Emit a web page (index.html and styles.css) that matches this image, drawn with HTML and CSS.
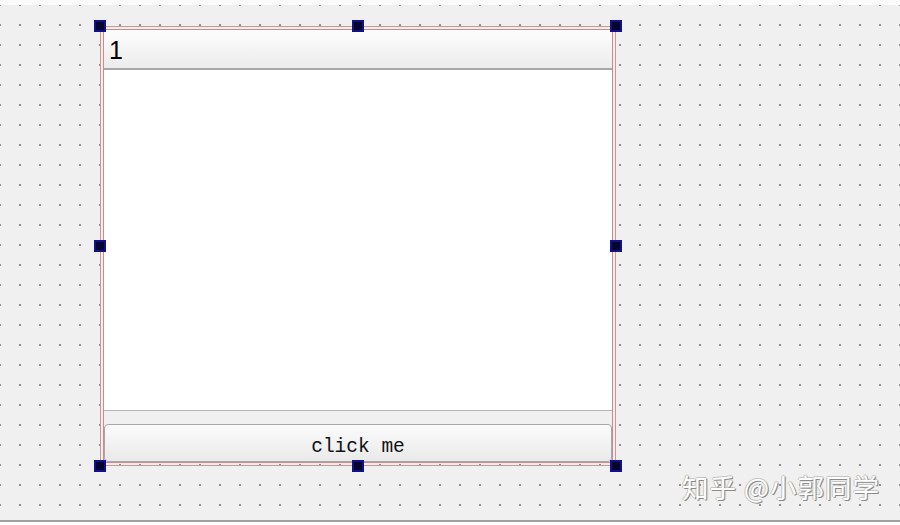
FILE: index.html
```html
<!DOCTYPE html>
<html lang="zh">
<head>
  <meta charset="UTF-8">
  <title>Designer Form</title>
  <link rel="stylesheet" href="styles.css">
</head>
<body>
  <div class="top-strip"></div>

  <!-- Form canvas with the grid -->
  <div class="canvas">
    <div class="frame">
      <div class="frame-inner">
        <div class="line-edit">1</div>
        <div class="text-area"></div>
        <div class="button-row">
          <div class="push-button">click me</div>
        </div>
      </div>

      <!-- selection handles -->
      <span class="handle h-tl"></span>
      <span class="handle h-tc"></span>
      <span class="handle h-tr"></span>
      <span class="handle h-ml"></span>
      <span class="handle h-mr"></span>
      <span class="handle h-bl"></span>
      <span class="handle h-bc"></span>
      <span class="handle h-br"></span>
    </div>

    <div class="watermark">知乎 @小郭同学</div>
  </div>

  <div class="bottom-line"></div>
  <div class="bottom-strip"></div>
</body>
</html>
```

FILE: styles.css
```css
html, body {
  height: 100%;
}

body {
  margin: 0;
  padding: 0;
  display: flex;
  flex-direction: column;
  font-family: 'Liberation Sans', Arial, sans-serif;
  background: #f0f0f0;
  overflow: hidden;
}

.top-strip {
  height: 5px;
  background: #fbfbfb;
}

.canvas {
  position: relative;
  flex: 1;
  background-color: #f0f0f0;
  background-image: radial-gradient(circle, #8c8c8c 0.7px, rgba(140, 140, 140, 0) 1.1px);
  background-size: 20px 20px;
  background-position: 10px 10px;
}

.bottom-line {
  height: 2px;
  background: #a0a0a0;
}

.bottom-strip {
  height: 3px;
  background: #ffffff;
}

/* red layout rectangle (double line) */
.frame {
  position: relative;
  width: 510px;
  margin: 21px 0 0 100px;
  border: 1px solid #d49494;
  padding: 2px;
}

.frame-inner {
  display: flex;
  flex-direction: column;
  border: 1px solid #d08888;
  background: #f0f0f0;
}

.line-edit {
  height: 38px;
  padding-left: 5px;
  font-size: 25px;
  line-height: 40px;
  color: #000;
  background: linear-gradient(#fdfdfd, #ececec);
  border-bottom: 2px solid #a8a8a8;
}

.text-area {
  height: 340px;
  background: #ffffff;
  border-bottom: 1px solid #b4b4b4;
}

.button-row {
  padding-top: 13px;
}

.push-button {
  height: 36px;
  border: 1px solid #a8a8a8;
  border-radius: 4px;
  background: linear-gradient(#fbfbfb, #e9e9e9);
  font-family: 'Liberation Mono', 'Courier New', monospace;
  font-size: 19.5px;
  line-height: 44px;
  text-align: center;
  color: #111;
}

.handle {
  position: absolute;
  width: 8px;
  height: 8px;
  background: #05052e;
  border: 2px solid #10108c;
}

.h-tl { left: -7px; top: -7px; }
.h-tc { left: 251px; top: -7px; }
.h-tr { right: -7px; top: -7px; }
.h-ml { left: -7px; top: 213px; }
.h-mr { right: -7px; top: 213px; }
.h-bl { left: -7px; bottom: -7px; }
.h-bc { left: 251px; bottom: -7px; }
.h-br { right: -7px; bottom: -7px; }

.watermark {
  position: absolute;
  left: 682px;
  top: 462px;
  font-family: 'Noto Sans CJK SC', sans-serif;
  font-size: 26.5px;
  color: #ffffff;
  letter-spacing: 1px;
  text-shadow: 1px 1px 0 #8a8a8a, -1px 0 0 #c4c4c4, 0 -1px 0 #c4c4c4, 1px 0 1px #a0a0a0;
}
```
